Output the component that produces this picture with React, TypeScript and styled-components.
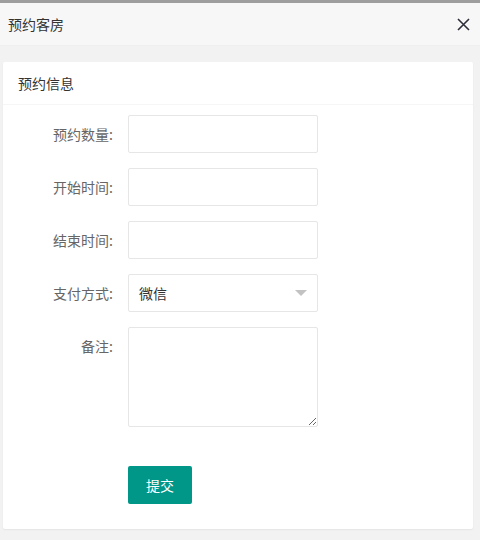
import React from "react";
import styled, { createGlobalStyle } from "styled-components";

const GlobalStyle = createGlobalStyle`
  html, body {
    margin: 0;
    padding: 0;
    background: #f2f2f2;
    font-family: "Noto Sans CJK SC", "Noto Sans", "Liberation Sans", sans-serif;
    font-size: 14px;
    color: #333;
  }
  * { box-sizing: border-box; }
`;

const Page = styled.div`
  width: 480px;
  height: 540px;
  display: flex;
  flex-direction: column;
  background: #f2f2f2;
  border-top: 3px solid #9e9e9e;
  overflow: hidden;
`;

const TitleBar = styled.div`
  height: 43px;
  flex: none;
  display: flex;
  align-items: center;
  justify-content: space-between;
  padding: 0 9px 0 8px;
  background: #f7f7f7;
  border-bottom: 1px solid #efefef;
`;

const Title = styled.span`
  font-size: 14px;
  color: #333;
`;

const CloseButton = styled.button`
  width: 16px;
  height: 16px;
  padding: 0;
  border: none;
  background: none;
  display: flex;
  align-items: center;
  justify-content: center;
  cursor: pointer;
`;

const Content = styled.div`
  padding: 16px 7px 0 3px;
`;

const Card = styled.div`
  background: #fff;
  border-radius: 2px;
  box-shadow: 0 1px 2px 0 rgba(0, 0, 0, 0.06);
`;

const CardHeader = styled.div`
  height: 43px;
  line-height: 42px;
  padding: 0 15px;
  border-bottom: 1px solid #f6f6f6;
  color: #333;
  font-size: 14px;
`;

const CardBody = styled.div`
  padding: 10px 15px;
`;

const Form = styled.form`
  display: flex;
  flex-direction: column;
`;

const Row = styled.div<{ $top?: number }>`
  display: flex;
  align-items: flex-start;
  margin-bottom: 15px;
  margin-top: ${(p) => p.$top ?? 0}px;
`;

const Label = styled.label`
  width: 110px;
  flex: none;
  padding: 9px 15px 9px 0;
  line-height: 20px;
  text-align: right;
  color: #666;
  font-size: 14px;
`;

const Input = styled.input`
  width: 190px;
  height: 38px;
  padding-left: 10px;
  border: 1px solid #e6e6e6;
  border-radius: 2px;
  background: #fff;
  font: inherit;
  color: #333;
  outline: none;
`;

const SelectBox = styled.div`
  position: relative;
  width: 190px;
  height: 38px;
  padding-left: 10px;
  border: 1px solid #e6e6e6;
  border-radius: 2px;
  display: flex;
  align-items: center;
  color: #333;
`;

const Caret = styled.i`
  position: absolute;
  right: 10px;
  top: 15px;
  width: 0;
  height: 0;
  border-style: solid;
  border-width: 6px 6px 0 6px;
  border-color: #c2c2c2 transparent transparent transparent;
`;

const TextArea = styled.textarea`
  width: 190px;
  height: 100px;
  padding: 6px 10px;
  border: 1px solid #e6e6e6;
  border-radius: 2px;
  font: inherit;
  color: #333;
  outline: none;
`;

const SubmitButton = styled.button`
  margin-left: 110px;
  height: 38px;
  padding: 0 18px;
  border: none;
  border-radius: 2px;
  background: #009688;
  color: #fff;
  font: inherit;
  font-size: 14px;
  cursor: pointer;
`;

const fields = ["预约数量:", "开始时间:", "结束时间:"];

export default function App() {
  return (
    <>
      <GlobalStyle />
      <Page>
        <TitleBar>
          <Title>预约客房</Title>
          <CloseButton aria-label="关闭">
            <svg width="13" height="13" viewBox="0 0 13 13">
              <path d="M1 1 L12 12 M12 1 L1 12" stroke="#2e2e3a" strokeWidth="1.6" />
            </svg>
          </CloseButton>
        </TitleBar>
        <Content>
          <Card>
            <CardHeader>预约信息</CardHeader>
            <CardBody>
              <Form onSubmit={(e) => e.preventDefault()}>
                {fields.map((f) => (
                  <Row key={f}>
                    <Label>{f}</Label>
                    <Input />
                  </Row>
                ))}
                <Row>
                  <Label>支付方式:</Label>
                  <SelectBox>
                    微信
                    <Caret />
                  </SelectBox>
                </Row>
                <Row>
                  <Label>备注:</Label>
                  <TextArea />
                </Row>
                <Row $top={24}>
                  <SubmitButton type="submit">提交</SubmitButton>
                </Row>
              </Form>
            </CardBody>
          </Card>
        </Content>
      </Page>
    </>
  );
}
